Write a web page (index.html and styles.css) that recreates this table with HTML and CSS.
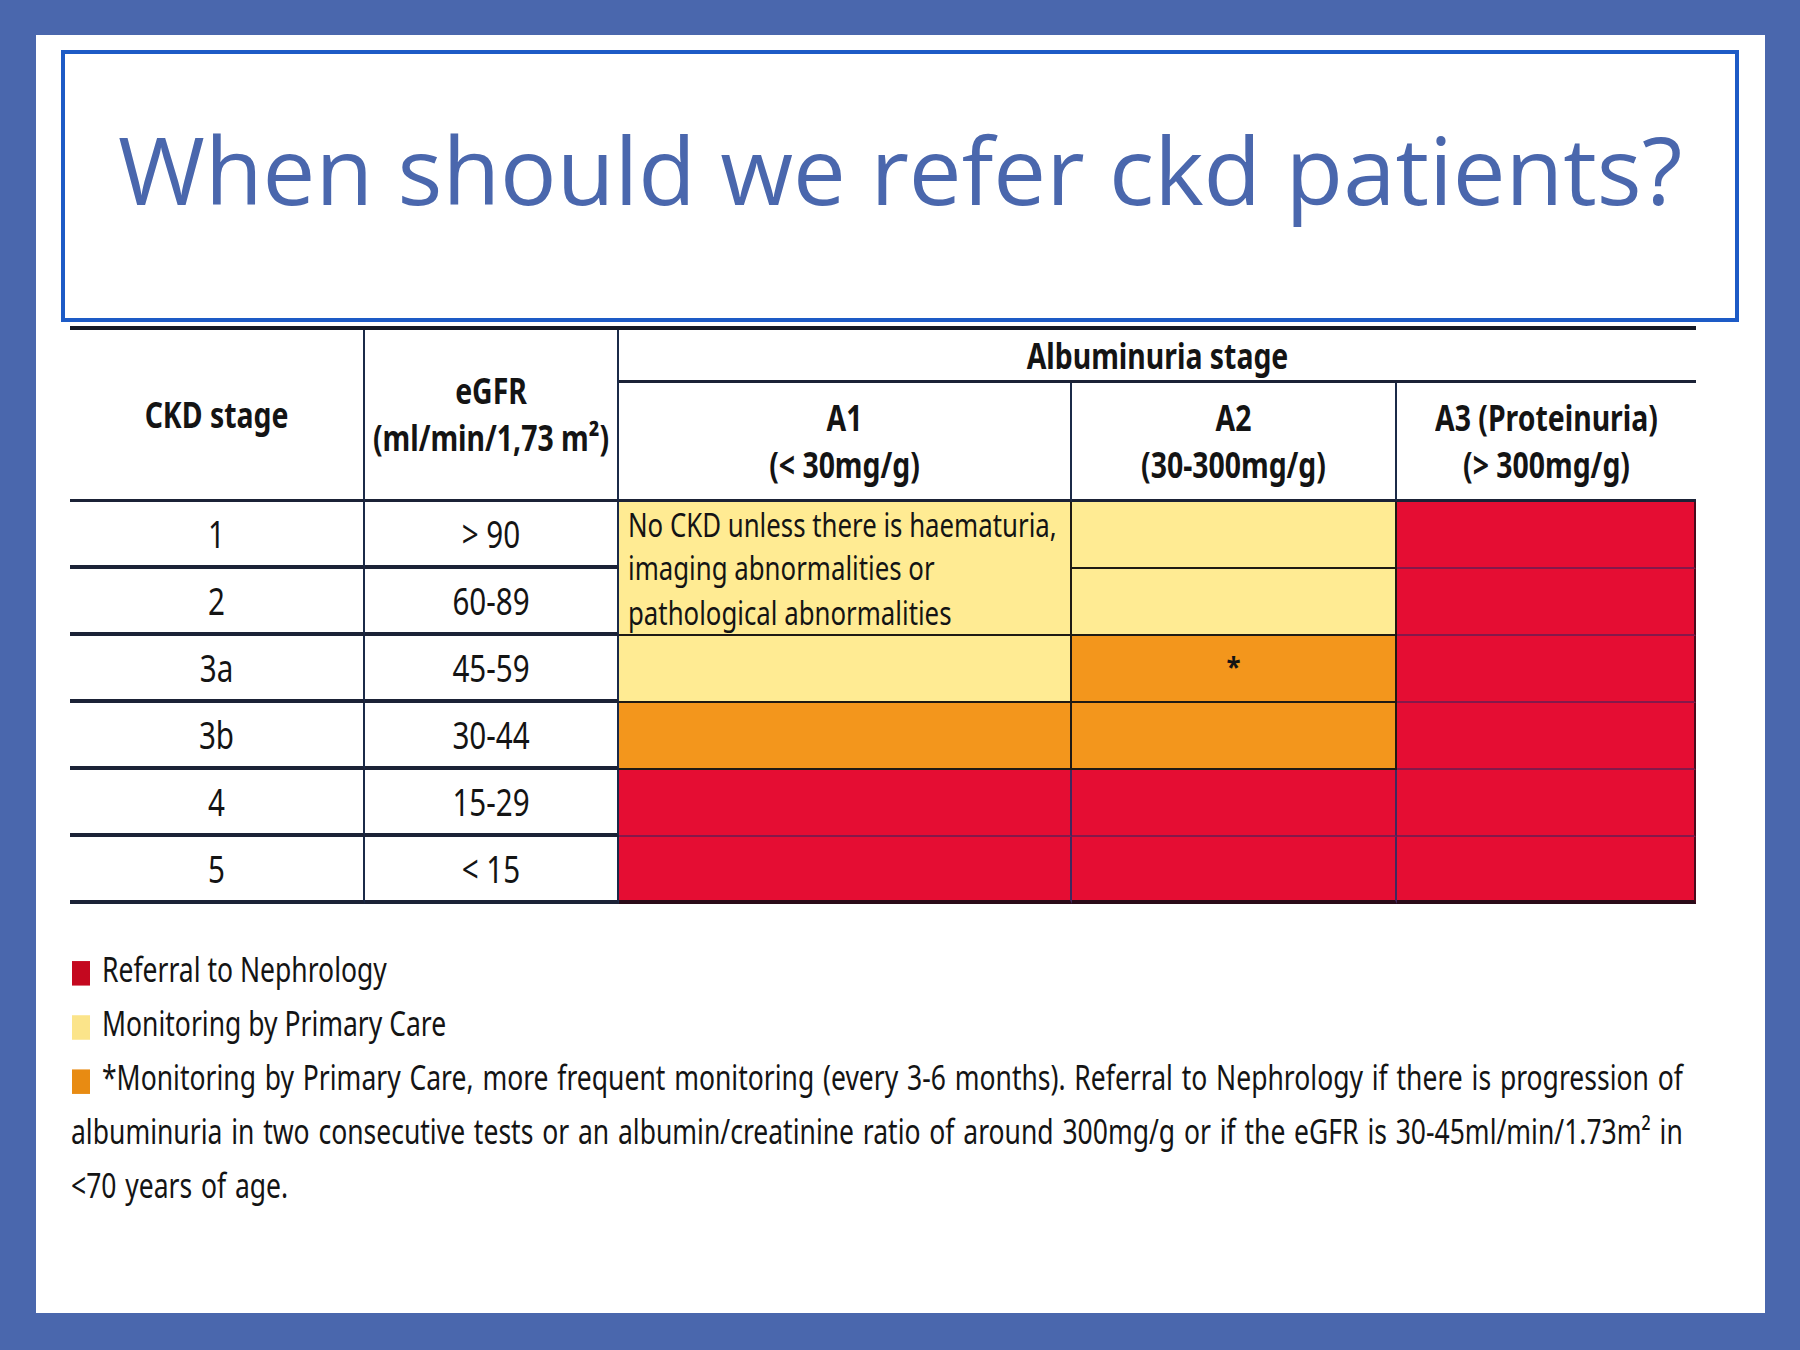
FILE: index.html
```html
<!DOCTYPE html>
<html lang="en">
<head>
<meta charset="utf-8">
<title>When should we refer ckd patients?</title>
<link rel="stylesheet" href="styles.css">
</head>
<body>
<div class="slide">
  <div class="title-box">
    <h1 class="title">When should we refer ckd patients?</h1>
  </div>

  <table class="ckd">
    <colgroup>
      <col class="c-stage"><col class="c-egfr"><col class="c-a1"><col class="c-a2"><col class="c-a3">
    </colgroup>
    <thead>
      <tr class="h1row">
        <th rowspan="2" class="hd vline hbot"><span class="tx">CKD stage</span></th>
        <th rowspan="2" class="hd vline hbot"><span class="tx">eGFR<br>(ml/min/1,73 m²)</span></th>
        <th colspan="3" class="hd alb"><span class="tx">Albuminuria stage</span></th>
      </tr>
      <tr class="h2row">
        <th class="hd vline hbot"><span class="tx">A1<br>(&lt; 30mg/g)</span></th>
        <th class="hd vline hbot"><span class="tx">A2<br>(30-300mg/g)</span></th>
        <th class="hd hbot"><span class="tx">A3 (Proteinuria)<br>(&gt; 300mg/g)</span></th>
      </tr>
    </thead>
    <tbody>
      <tr>
        <td class="num vline rule"><span class="tx">1</span></td>
        <td class="num vline rule"><span class="tx">&gt; 90</span></td>
        <td rowspan="2" class="yellow note kline"><span class="tx">No CKD unless there is haematuria,<br>imaging abnormalities or<br>pathological abnormalities</span></td>
        <td class="yellow kline"></td>
        <td class="red redge pline"></td>
      </tr>
      <tr>
        <td class="num vline rule"><span class="tx">2</span></td>
        <td class="num vline rule"><span class="tx">60-89</span></td>
        <td class="yellow kline"></td>
        <td class="red redge pline"></td>
      </tr>
      <tr>
        <td class="num vline rule"><span class="tx">3a</span></td>
        <td class="num vline rule"><span class="tx">45-59</span></td>
        <td class="yellow kline"></td>
        <td class="orange kline star">*</td>
        <td class="red redge pline"></td>
      </tr>
      <tr>
        <td class="num vline rule"><span class="tx">3b</span></td>
        <td class="num vline rule"><span class="tx">30-44</span></td>
        <td class="orange kline"></td>
        <td class="orange kline"></td>
        <td class="red redge pline"></td>
      </tr>
      <tr>
        <td class="num vline rule"><span class="tx">4</span></td>
        <td class="num vline rule"><span class="tx">15-29</span></td>
        <td class="red rsep pline"></td>
        <td class="red rsep pline"></td>
        <td class="red redge pline"></td>
      </tr>
      <tr>
        <td class="num vline rule"><span class="tx">5</span></td>
        <td class="num vline rule"><span class="tx">&lt; 15</span></td>
        <td class="red rsep last"></td>
        <td class="red rsep last"></td>
        <td class="red redge last"></td>
      </tr>
    </tbody>
  </table>

  <div class="legend">
    <p class="item"><span class="sq sq-red"></span>Referral to Nephrology</p>
    <p class="item"><span class="sq sq-yellow"></span>Monitoring by Primary Care</p>
    <p class="item long"><span class="sq sq-orange"></span>*Monitoring by Primary Care, more frequent monitoring (every 3-6 months). Referral to Nephrology if there is progression of<br>albuminuria in two consecutive tests or an albumin/creatinine ratio of around 300mg/g or if the eGFR is 30-45ml/min/1.73m² in<br>&lt;70 years of age.</p>
  </div>
</div>
</body>
</html>
```

FILE: styles.css
```css
html, body {
  margin: 0;
  padding: 0;
}

body {
  background: #4a67ad;
  padding: 35px 35px 37px 36px;
}

.slide {
  background: #ffffff;
  height: 1278px;
  padding: 15px 0 0 25px;
  box-sizing: border-box;
  overflow: hidden;
}

.title-box {
  width: 1678px;
  height: 272px;
  box-sizing: border-box;
  border: 4px solid #1d5bc6;
  padding: 50px 0 0 53px;
}

.title {
  margin: 0;
  font-family: "Open Sans", "Noto Sans", sans-serif;
  font-weight: 400;
  font-size: 94.1px;
  line-height: normal;
  color: #4a67ad;
  white-space: nowrap;
}

/* ---------- table ---------- */
.ckd {
  margin: 4px 0 0 9px;
  border-collapse: separate;
  border-spacing: 0;
  table-layout: fixed;
  width: 1626px;
  border-top: 4px solid #151a26;
  font-family: "Noto Sans", "Open Sans", sans-serif;
  color: #141414;
}

.c-stage { width: 295px; }
.c-egfr { width: 254px; }
.c-a1 { width: 453px; }
.c-a2 { width: 325px; }
.c-a3 { width: 299px; }

.ckd th, .ckd td {
  padding: 0;
  box-sizing: border-box;
  overflow: visible;
}

.h1row { height: 53px; }
.h2row { height: 119px; }
.ckd tbody tr { height: 67px; }

.tx {
  display: inline-block;
  white-space: nowrap;
}

.hd {
  font-weight: 700;
  font-size: 28.4px;
  line-height: 38.4px;
  text-align: center;
  vertical-align: middle;
  background: #ffffff;
}

.hd .tx {
  transform: scaleY(1.25);
}

.alb {
  border-bottom: 3px solid #1b2236;
}

.vline {
  border-right: 2px solid #1b2a48;
}

.hbot {
  border-bottom: 3px solid #1b2236;
}

.num {
  font-size: 29.6px;
  line-height: 40px;
  text-align: center;
  vertical-align: middle;
  background: #ffffff;
}

.num .tx {
  transform: scaleY(1.3);
}

.rule {
  border-bottom: 4px solid #1b2236;
}

.note {
  font-size: 25.8px;
  line-height: 34.4px;
  text-align: left;
  vertical-align: top;
  padding: 0 0 0 9px !important;
  border-right: 2px solid #1a1a1a;
}

.note .tx {
  transform: scaleY(1.28);
  transform-origin: 0 0;
}

.yellow { background: #ffeb93; }
.orange { background: #f3961c; }
.red { background: #e50d33; }

.kline {
  border-bottom: 2px solid #1e1a14;
}

.yellow.kline, .orange.kline {
  border-right: 2px solid #1e1a14;
}

.star {
  text-align: center;
  vertical-align: top;
  font-size: 26px;
  font-weight: 700;
  line-height: 62px;
}

.pline {
  border-bottom: 2px solid #86184a;
}

.rsep {
  border-right: 2px solid #40285e;
}

.redge {
  border-right: 2px solid #4a0a1c;
}

.last {
  border-bottom: 4px solid #2a0a18;
}

/* ---------- legend ---------- */
.legend {
  margin: 39px 0 0 10px;
  font-family: "Noto Sans", "Open Sans", sans-serif;
  font-size: 26.5px;
  line-height: 41.9px;
  color: #141414;
  transform: scaleY(1.29);
  transform-origin: 0 0;
}

.item {
  margin: 0;
  white-space: nowrap;
}

.long {
  word-spacing: 1.9px;
}

.sq {
  display: inline-block;
  width: 18px;
  height: 19px;
  margin: 0 12px 0 1px;
  vertical-align: -3px;
  word-spacing: 0;
}

.sq-red { background: #c4081f; }
.sq-yellow { background: #fbe48a; }
.sq-orange { background: #e88b12; }
```
